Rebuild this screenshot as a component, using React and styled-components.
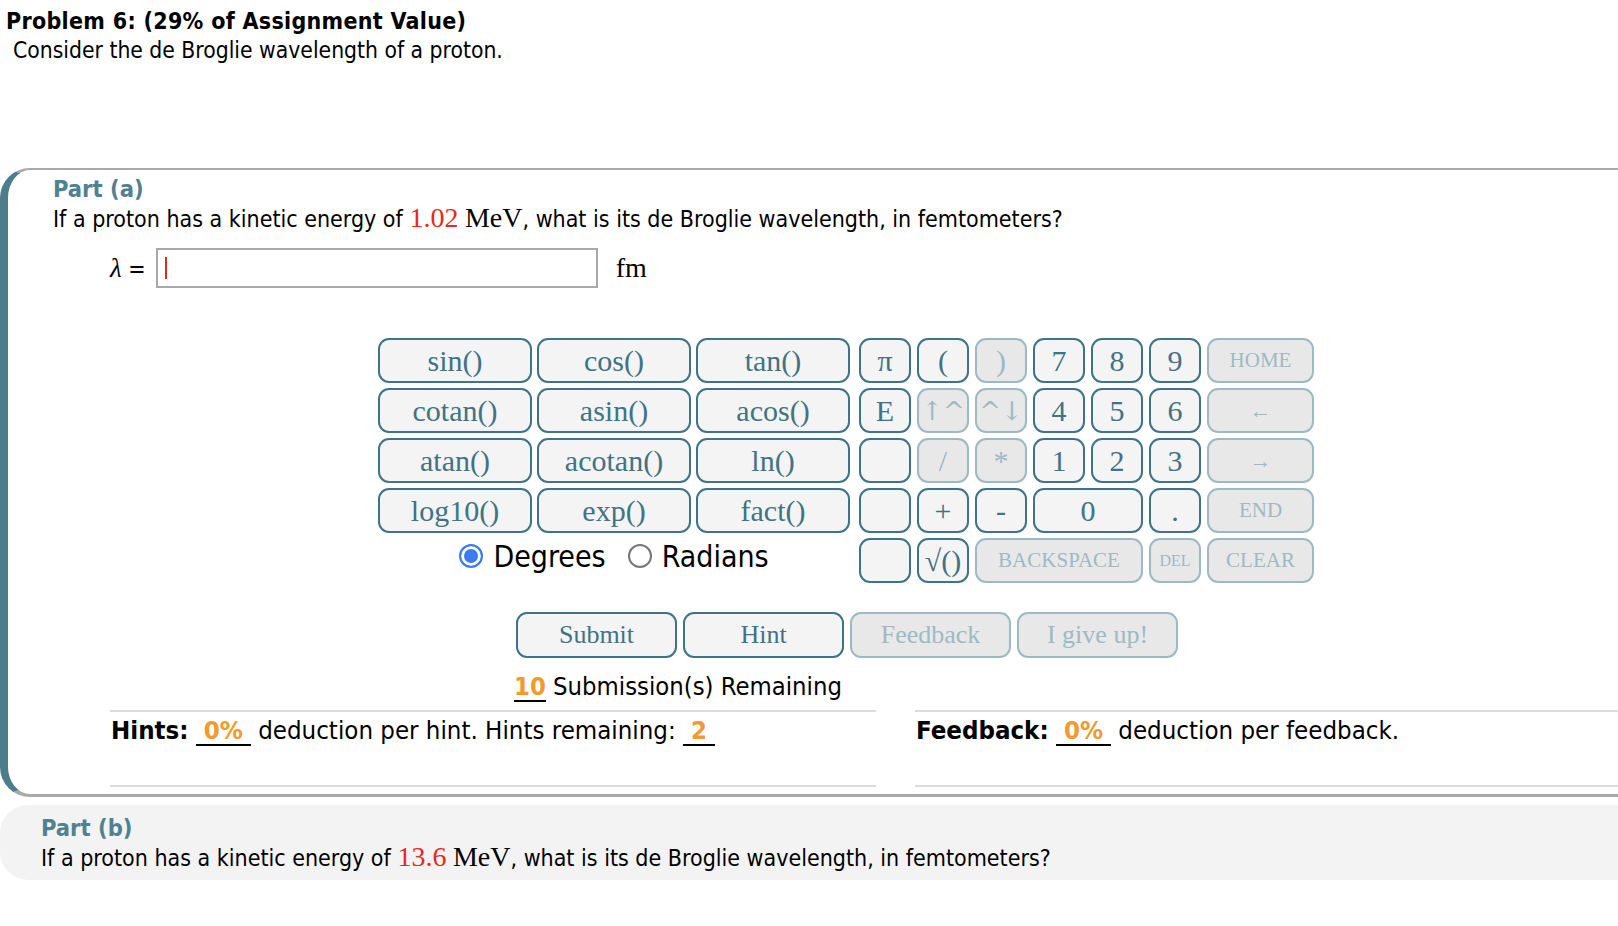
import React, { useState } from 'react';
import styled, { createGlobalStyle } from 'styled-components';

const GlobalStyle = createGlobalStyle`
    body {
        margin: 0;
        background: #fff;
        font-family: "DejaVu Sans Condensed", "DejaVu Sans", sans-serif;
        color: #000;
    }
`;

const TEAL = '#3f7385';
const LIGHT = '#9dbac4';
const ORANGE = '#f19a2f';

const Page = styled.div`
    width: 1618px;
    overflow: hidden;
    padding-top: 8px;
`;
const Header = styled.div`
    padding-left: 6px;
    height: 160px;
`;
const Title = styled.div`
    font-size: 23px;
    letter-spacing: 0.3px;
    font-weight: 700;
    line-height: 27px;
`;
const Intro = styled.div`
    font-size: 22.7px;
    line-height: 31px;
    padding-left: 7px;
`;
const PartBox = styled.div`
    border-top: 2px solid #a9a9a9;
    border-bottom: 3px solid #a9a9a9;
    border-left: 8px solid #4b7d8b;
    border-radius: 30px 0 0 30px;
    padding: 5px 0 8px 45px;
    height: 629px;
    box-sizing: border-box;
`;
const PartLabel = styled.div`
    font-size: 23.5px;
    font-weight: 700;
    line-height: 28px;
    color: #4f8191;
`;
const Question = styled.div`
    font-size: 23px;
    line-height: 29px;
`;
const Num = styled.span`
    font-family: "Liberation Serif", serif;
    font-size: 28px;
    color: #e8281e;
`;
const Unit = styled.span`
    font-family: "Liberation Serif", serif;
    font-size: 28px;
`;
const AnswerRow = styled.div`
    display: flex;
    align-items: center;
    gap: 10px;
    margin: 14px 0 0 57px;
`;
const Lambda = styled.span`
    font-size: 23px;
    &::first-letter {
        font-family: "Liberation Serif", serif;
        font-style: italic;
        font-size: 27px;
    }
`;
const Input = styled.div`
    width: 442px;
    height: 40px;
    box-sizing: border-box;
    border: 2px solid #a9a9a9;
    display: flex;
    align-items: center;
    padding-left: 7px;
    &::before {
        content: '';
        width: 2px;
        height: 22px;
        background: #e8281e;
    }
`;
const FmUnit = styled(Unit)`
    margin-left: 8px;
`;
const Keypad = styled.div`
    display: flex;
    gap: 9px;
    margin: 50px 0 0 325px;
`;
const FuncArea = styled.div`
    display: flex;
    flex-direction: column;
`;
const FuncGrid = styled.div`
    display: grid;
    grid-template-columns: repeat(3, 154px);
    grid-auto-rows: 45px;
    gap: 5px;
`;
const Key = styled.button`
    box-sizing: border-box;
    height: 45px;
    margin: 0;
    padding: 0;
    border: 2px solid ${({ $off }) => ($off ? LIGHT : TEAL)};
    border-radius: 11px;
    background: ${({ $off }) => ($off ? '#e8e8e8' : '#f4f4f4')};
    color: ${({ $off }) => ($off ? LIGHT : TEAL)};
    font-family: ${({ $alt }) => ($alt ? '"DejaVu Serif", serif' : '"Liberation Serif", serif')};
    font-size: ${({ $size }) => $size || 30}px;
    grid-column: ${({ $span }) => ($span ? `span ${$span}` : 'auto')};
    display: flex;
    align-items: center;
    justify-content: center;
    line-height: 1;
`;
const KeyGrid = styled.div`
    display: grid;
    grid-template-columns: repeat(6, 52px) 107px;
    grid-auto-rows: 45px;
    gap: 5px 6px;
`;
const RadioRow = styled.div`
    display: flex;
    align-items: center;
    justify-content: center;
    gap: 6px;
    height: 46px;
    font-size: 30px;
`;
const Radio = styled.span`
    width: 24px;
    height: 24px;
    box-sizing: border-box;
    border-radius: 50%;
    border: ${({ $on }) => ($on ? '2px solid #3b7cf4' : '2px solid #777')};
    background: ${({ $on }) => ($on ? '#3b7cf4' : '#fff')};
    box-shadow: ${({ $on }) => ($on ? 'inset 0 0 0 3px #fff' : 'none')};
    margin-left: ${({ $gap }) => $gap || 0}px;
    margin-right: 4px;
`;
const ActionRow = styled.div`
    display: flex;
    gap: 6px;
    margin: 29px 0 0 463px;
`;
const ActionBtn = styled(Key)`
    width: 161px;
    height: 46px;
    font-size: 26px;
`;
const Remaining = styled.div`
    margin: 13px 0 0 461px;
    font-size: 25.4px;
    line-height: 30px;
`;
const Blank = styled.span`
    display: inline-block;
    color: ${ORANGE};
    font-weight: 700;
    border-bottom: 2px solid #000;
    padding: 0 ${({ $pad }) => $pad || 0}px;
    line-height: 27px;
`;
const InfoRow = styled.div`
    display: grid;
    grid-template-columns: 766px 1fr;
    gap: 39px;
    margin: 8px 0 0 57px;
`;
const InfoCell = styled.div`
    border-top: 2px solid #dcdcdc;
    border-bottom: 2px solid #dcdcdc;
    height: 77px;
    box-sizing: border-box;
    padding: 3px 0 0 1px;
    font-size: 25.6px;
    line-height: 30px;
`;
const Bold = styled.b`
    font-weight: 700;
`;
const PartB = styled.div`
    margin-top: 8px;
    background: #f3f3f3;
    border-radius: 28px 0 0 28px;
    height: 75px;
    box-sizing: border-box;
    padding: 9px 0 0 41px;
`;

const funcs = ['sin()', 'cos()', 'tan()', 'cotan()', 'asin()', 'acos()', 'atan()', 'acotan()', 'ln()', 'log10()', 'exp()', 'fact()'];

const keys = [
    { t: 'π' }, { t: '(' }, { t: ')', off: 1 }, { t: '7' }, { t: '8' }, { t: '9' }, { t: 'HOME', off: 1, size: 21 },
    { t: 'E' }, { t: '↑^', off: 1, size: 26, alt: 1 }, { t: '^↓', off: 1, size: 26, alt: 1 }, { t: '4' }, { t: '5' }, { t: '6' }, { t: '←', off: 1, size: 22 },
    { t: '' }, { t: '/', off: 1 }, { t: '*', off: 1 }, { t: '1' }, { t: '2' }, { t: '3' }, { t: '→', off: 1, size: 22 },
    { t: '' }, { t: '+' }, { t: '-' }, { t: '0', span: 2 }, { t: '.' }, { t: 'END', off: 1, size: 21 },
    { t: '' }, { t: '√()' }, { t: 'BACKSPACE', off: 1, span: 3, size: 21 }, { t: 'DEL', off: 1, size: 16 }, { t: 'CLEAR', off: 1, size: 21 },
];

const App = () => {
    const [deg, setDeg] = useState(true);
    return (
        <Page>
            <GlobalStyle />
            <Header>
                <Title>Problem 6: (29% of Assignment Value)</Title>
                <Intro>Consider the de Broglie wavelength of a proton.</Intro>
            </Header>
            <PartBox>
                <PartLabel>Part (a)</PartLabel>
                <Question>
                    If a proton has a kinetic energy of <Num>1.02</Num> <Unit>MeV</Unit>, what is its de Broglie wavelength, in femtometers?
                </Question>
                <AnswerRow>
                    <Lambda>λ =</Lambda>
                    <Input />
                    <FmUnit>fm</FmUnit>
                </AnswerRow>
                <Keypad>
                    <FuncArea>
                        <FuncGrid>
                            {funcs.map(f => <Key key={f}>{f}</Key>)}
                        </FuncGrid>
                        <RadioRow>
                            <Radio $on={deg} onClick={() => setDeg(true)} />Degrees
                            <Radio $on={!deg} $gap={16} onClick={() => setDeg(false)} />Radians
                        </RadioRow>
                    </FuncArea>
                    <KeyGrid>
                        {keys.map((k, i) => (
                            <Key key={i} $off={k.off} $span={k.span} $size={k.size} $alt={k.alt}>{k.t}</Key>
                        ))}
                    </KeyGrid>
                </Keypad>
                <ActionRow>
                    <ActionBtn>Submit</ActionBtn>
                    <ActionBtn>Hint</ActionBtn>
                    <ActionBtn $off>Feedback</ActionBtn>
                    <ActionBtn $off>I give up!</ActionBtn>
                </ActionRow>
                <Remaining><Blank>10</Blank> Submission(s) Remaining</Remaining>
                <InfoRow>
                    <InfoCell>
                        <Bold>Hints:</Bold> <Blank $pad={8}>0%</Blank> deduction per hint. Hints remaining: <Blank $pad={8}>2</Blank>
                    </InfoCell>
                    <InfoCell>
                        <Bold>Feedback:</Bold> <Blank $pad={8}>0%</Blank> deduction per feedback.
                    </InfoCell>
                </InfoRow>
            </PartBox>
            <PartB>
                <PartLabel>Part (b)</PartLabel>
                <Question>
                    If a proton has a kinetic energy of <Num>13.6</Num> <Unit>MeV</Unit>, what is its de Broglie wavelength, in femtometers?
                </Question>
            </PartB>
        </Page>
    );
};

export default App;
